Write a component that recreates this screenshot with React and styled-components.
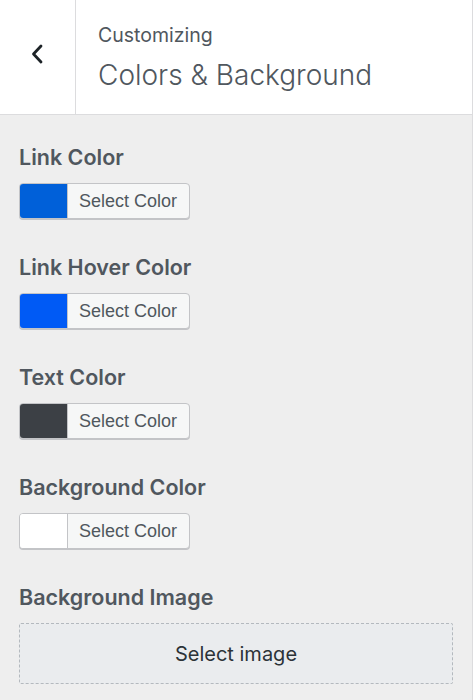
import styled, { createGlobalStyle } from "styled-components";

const Global = createGlobalStyle`
  html, body {
    margin: 0;
    padding: 0;
    background: #eeeeee;
    font-family: Inter, "Noto Sans", "Liberation Sans", sans-serif;
  }
  * { box-sizing: border-box; }
`;

const Panel = styled.div`
  width: 473px;
  height: 700px;
  background: #eeeeee;
  border-right: 1px solid #dcdcde;
  overflow: hidden;
`;

const Header = styled.header`
  display: flex;
  height: 115px;
  background: #fff;
  border-bottom: 1px solid #dcdcde;
`;

const BackButton = styled.button`
  width: 76px;
  flex: none;
  display: flex;
  align-items: center;
  justify-content: center;
  background: #fff;
  border: none;
  border-right: 1px solid #dcdcde;
  padding: 0 2px 6px 0;
  color: #1d2327;
  cursor: pointer;
`;

const Titles = styled.div`
  display: flex;
  flex-direction: column;
  padding: 22px 0 0 22px;
`;

const Small = styled.span`
  font-size: 19.5px;
  color: #50575e;
  line-height: 26px;
`;

const Big = styled.h1`
  margin: 10px 0 0;
  font-size: 28px;
  font-weight: 300;
  color: #50575e;
  line-height: 34px;
`;

const Body = styled.div`
  display: flex;
  flex-direction: column;
  gap: 35px;
  padding: 29px 19px 0;
`;

const Control = styled.div`
  display: flex;
  flex-direction: column;
  gap: 13px;
`;

const Label = styled.label`
  font-size: 21.5px;
  font-weight: 600;
  color: #50575e;
  line-height: 26px;
`;

const ColorButton = styled.button`
  display: flex;
  align-self: flex-start;
  width: 171px;
  height: 36px;
  padding: 0;
  border: 1px solid #c3c4c7;
  border-radius: 4px;
  overflow: hidden;
  background: #f6f7f7;
  box-shadow: 0 1px 0 #c3c4c7;
  cursor: pointer;
`;

const Swatch = styled.span`
  width: 48px;
  flex: none;
  background: ${(p) => p.$color};
  border-right: 1px solid #c3c4c7;
`;

const ButtonText = styled.span`
  flex: 1;
  display: flex;
  align-items: center;
  padding-left: 11px;
  font-family: inherit;
  font-size: 18px;
  color: #50575e;
`;

const ImageDrop = styled.button`
  height: 61px;
  width: 100%;
  border: 1px dashed #b4b9be;
  border-radius: 2px;
  background: #eaecee;
  font-family: inherit;
  font-size: 20px;
  color: #2c3338;
  cursor: pointer;
`;

const colors = [
  { label: "Link Color", color: "#0060d9" },
  { label: "Link Hover Color", color: "#005af5" },
  { label: "Text Color", color: "#3c4045" },
  { label: "Background Color", color: "#ffffff" },
];

export default function App() {
  return (
    <>
      <Global />
      <Panel>
        <Header>
          <BackButton aria-label="Back">
            <svg width="16" height="24" viewBox="0 0 16 24" fill="none">
              <path d="M12 4 L4.5 12 L12 20" stroke="currentColor" strokeWidth="2.8" strokeLinecap="round" strokeLinejoin="round" />
            </svg>
          </BackButton>
          <Titles>
            <Small>Customizing</Small>
            <Big>Colors &amp; Background</Big>
          </Titles>
        </Header>
        <Body>
          {colors.map((c) => (
            <Control key={c.label}>
              <Label>{c.label}</Label>
              <ColorButton>
                <Swatch $color={c.color} />
                <ButtonText>Select Color</ButtonText>
              </ColorButton>
            </Control>
          ))}
          <Control>
            <Label>Background Image</Label>
            <ImageDrop>Select image</ImageDrop>
          </Control>
        </Body>
      </Panel>
    </>
  );
}
